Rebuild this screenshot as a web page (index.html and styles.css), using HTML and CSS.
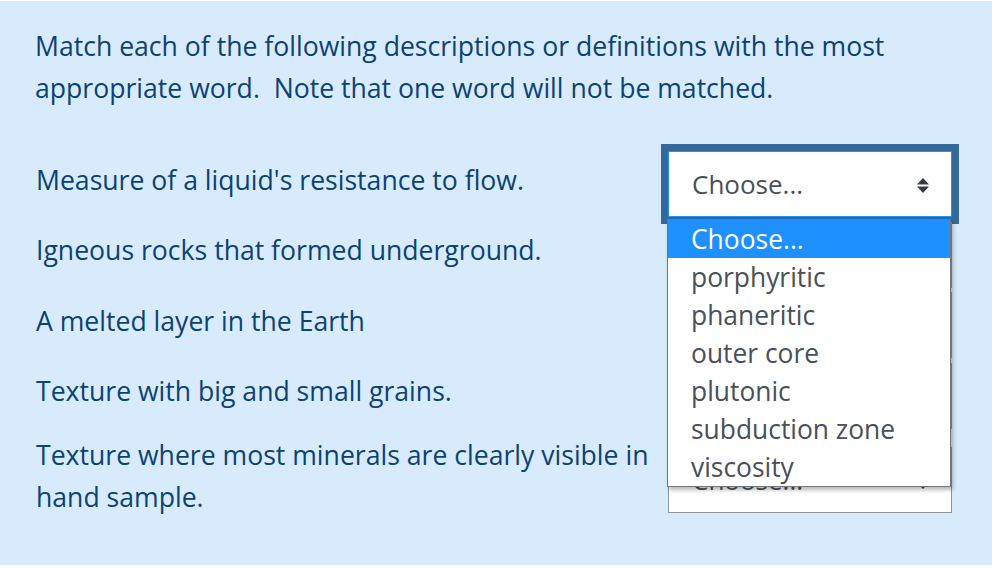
FILE: index.html
```html
<!DOCTYPE html>
<html lang="en">
<head>
<meta charset="utf-8">
<title>Match question</title>
<link rel="stylesheet" href="styles.css">
</head>
<body>
<div class="que">
  <p class="prompt">Match each of the following descriptions or definitions with the most appropriate word.&nbsp; Note that one word will not be matched.</p>
  <div class="answers">
    <div class="row">
      <div class="label">Measure of a liquid's resistance to flow.</div>
      <div class="control">
        <div class="select focused"><span>Choose...</span><svg class="arrows" width="12" height="15" viewBox="0 0 12 15"><path d="M0 6.5 L6 0 L12 6.5 Z M0 8.5 L12 8.5 L6 15 Z" fill="#343a40"/></svg></div>
        <ul class="dropdown">
          <li class="active">Choose...</li>
          <li>porphyritic</li>
          <li>phaneritic</li>
          <li>outer core</li>
          <li>plutonic</li>
          <li>subduction zone</li>
          <li>viscosity</li>
        </ul>
      </div>
    </div>
    <div class="row">
      <div class="label">Igneous rocks that formed underground.</div>
      <div class="control">
        <div class="select"><span>Choose...</span><svg class="arrows" width="12" height="15" viewBox="0 0 12 15"><path d="M0 6.5 L6 0 L12 6.5 Z M0 8.5 L12 8.5 L6 15 Z" fill="#343a40"/></svg></div>
      </div>
    </div>
    <div class="row">
      <div class="label">A melted layer in the Earth</div>
      <div class="control">
        <div class="select"><span>Choose...</span><svg class="arrows" width="12" height="15" viewBox="0 0 12 15"><path d="M0 6.5 L6 0 L12 6.5 Z M0 8.5 L12 8.5 L6 15 Z" fill="#343a40"/></svg></div>
      </div>
    </div>
    <div class="row">
      <div class="label">Texture with big and small grains.</div>
      <div class="control">
        <div class="select"><span>Choose...</span><svg class="arrows" width="12" height="15" viewBox="0 0 12 15"><path d="M0 6.5 L6 0 L12 6.5 Z M0 8.5 L12 8.5 L6 15 Z" fill="#343a40"/></svg></div>
      </div>
    </div>
    <div class="row">
      <div class="label">Texture where most minerals are clearly visible in hand sample.</div>
      <div class="control">
        <div class="select"><span>Choose...</span><svg class="arrows" width="12" height="15" viewBox="0 0 12 15"><path d="M0 6.5 L6 0 L12 6.5 Z M0 8.5 L12 8.5 L6 15 Z" fill="#343a40"/></svg></div>
      </div>
    </div>
  </div>
</div>
</body>
</html>
```
FILE: styles.css
```css
html, body {
  margin: 0;
  padding: 0;
  background: #ffffff;
}

body {
  font-family: "Open Sans", "Noto Sans", "Liberation Sans", sans-serif;
}

.que {
  margin-top: 1px;
  width: 992px;
  height: 564px;
  box-sizing: border-box;
  padding: 24px 35px 0 35px;
  background: #d7ebfc;
  color: #0d4273;
}

.prompt {
  margin: 0 0 42px 0;
  font-size: 26.6px;
  line-height: 42px;
}

.answers {
  display: flex;
  flex-direction: column;
}

.row {
  display: flex;
  align-items: center;
  margin-bottom: 4.5px;
}

.label {
  width: 624px;
  padding: 2px 8px 9px 1px;
  font-size: 26.6px;
  line-height: 41.5px;
}

.control {
  position: relative;
}

.select {
  width: 284px;
  height: 66px;
  box-sizing: border-box;
  border: 1px solid #8f959e;
  background: #ffffff;
  display: flex;
  align-items: center;
  justify-content: space-between;
  padding: 0 22px 0 23px;
  font-size: 26px;
  color: #495057;
}

.select.focused {
  border-color: #1e90ff;
  box-shadow: 0 0 0 7px #33699b;
}

.arrows {
  display: block;
  margin-top: 2px;
}

.dropdown {
  position: absolute;
  top: 68px;
  left: -1px;
  width: 284px;
  box-sizing: border-box;
  margin: 0;
  padding: 0;
  list-style: none;
  background: #ffffff;
  border: 1px solid #767676;
  box-shadow: 2px 3px 4px rgba(0, 0, 0, 0.28);
  z-index: 5;
}

.dropdown li {
  height: 38px;
  line-height: 38px;
  padding-left: 23px;
  font-size: 26.4px;
  color: #495057;
}

.dropdown li.active {
  background: #1e90ff;
  color: #ffffff;
}
```
